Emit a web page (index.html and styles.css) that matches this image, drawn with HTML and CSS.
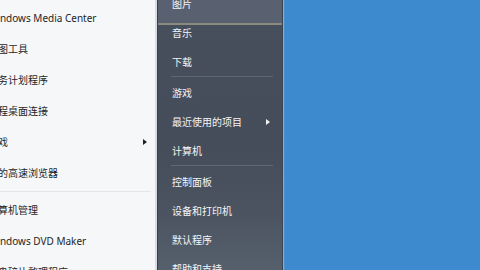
FILE: index.html
```html
<!DOCTYPE html>
<html lang="zh-CN">
<head>
<meta charset="utf-8">
<link rel="stylesheet" href="styles.css">
</head>
<body>
<div class="screen">
  <div class="left">
    <div class="item"><span class="label">Windows Media Center</span></div>
    <div class="item"><span class="label">截图工具</span></div>
    <div class="item"><span class="label">任务计划程序</span></div>
    <div class="item"><span class="label">远程桌面连接</span></div>
    <div class="item"><span class="label">游戏</span><span class="arrow dark"></span></div>
    <div class="item"><span class="label">快的高速浏览器</span></div>
    <div class="sep"></div>
    <div class="item"><span class="label">计算机管理</span></div>
    <div class="item"><span class="label">Windows DVD Maker</span></div>
    <div class="item"><span class="label">磁盘碎片整理程序</span></div>
  </div>
  <div class="right">
    <div class="top">
      <div class="ritem first"><span>图片</span></div>
    </div>
    <div class="ritem after-top"><span>音乐</span></div>
    <div class="ritem"><span>下载</span></div>
    <div class="rsep"></div>
    <div class="ritem"><span>游戏</span></div>
    <div class="ritem"><span>最近使用的项目</span><span class="arrow light"></span></div>
    <div class="ritem"><span>计算机</span></div>
    <div class="rsep"></div>
    <div class="ritem"><span>控制面板</span></div>
    <div class="ritem"><span>设备和打印机</span></div>
    <div class="ritem"><span>默认程序</span></div>
    <div class="ritem"><span>帮助和支持</span></div>
  </div>
  <div class="edge"></div>
  <div class="desktop"></div>
</div>
</body>
</html>
```
FILE: styles.css
```css
html, body {
  margin: 0;
  padding: 0;
}
body {
  width: 480px;
  height: 270px;
  overflow: hidden;
  font-family: "Noto Sans", "Noto Sans CJK SC", sans-serif;
  font-size: 10px;
}
.screen {
  display: flex;
  width: 480px;
  height: 270px;
  overflow: hidden;
}
.left {
  width: 155px;
  flex: none;
  background: #f6f7f9;
  border-right: 2px solid #d9dde3;
  padding-top: 2px;
  overflow: hidden;
  color: #1f1f1f;
}
.item {
  height: 31px;
  display: flex;
  align-items: center;
  justify-content: space-between;
  padding-right: 8px;
}
.label {
  margin-left: -12px;
  white-space: nowrap;
}
.sep {
  height: 1px;
  background: #e2e5ea;
  margin: 3px 4px 2px 0;
}
.arrow {
  width: 0;
  height: 0;
  border-top: 3px solid transparent;
  border-bottom: 3px solid transparent;
}
.arrow.dark {
  border-left: 4px solid #222;
}
.arrow.light {
  border-left: 4px solid #f2f2f2;
}
.right {
  width: 124px;
  flex: none;
  background: linear-gradient(180deg, #484f5c 0%, #464d5a 55%, #4c5461 80%, #56606d 100%);
  color: #f4f5f7;
  overflow: hidden;
  border-left: 1px solid #39404b;
}
.top {
  height: 23px;
  background: #596171;
  border-bottom: 2px solid #8c8a7e;
  overflow: hidden;
}
.ritem {
  height: 29px;
  display: flex;
  align-items: center;
  justify-content: space-between;
  padding: 0 12px 0 14px;
  white-space: nowrap;
}
.ritem.first {
  margin-top: -11px;
}
.ritem.after-top {
  margin-top: -7px;
}
.rsep {
  height: 1px;
  background: #5f6774;
  margin: 0 9px 1px 13px;
}
.edge {
  width: 3px;
  flex: none;
  background: linear-gradient(90deg, #3a4452 0 1px, #7fb0dd 1px 2px, #4a8fcc 2px);
}
.desktop {
  flex: 1;
  background: #3d8bce;
}
```
